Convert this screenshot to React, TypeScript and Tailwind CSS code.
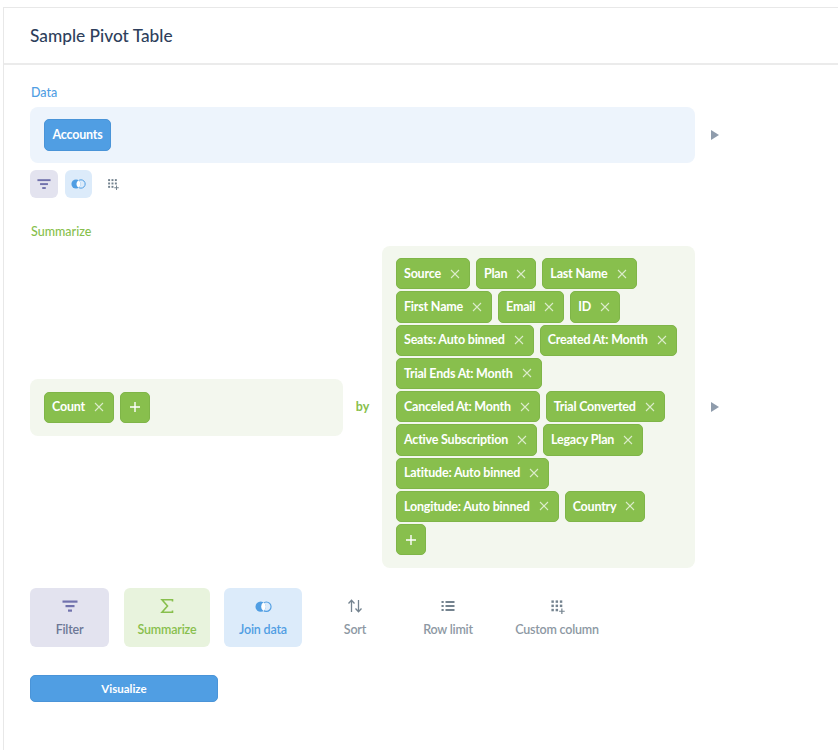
import React from "react";

const X = () => (
  <svg width="10" height="10" viewBox="0 0 10 10" className="ml-[9px] shrink-0 opacity-70" fill="none" stroke="#fff" strokeWidth="1.1">
    <path d="M1 1l8 8M9 1l-8 8" />
  </svg>
);

const Chip = ({ label }: { label: string }) => (
  <div className="flex h-[31.25px] items-center rounded-[5px] border border-[#7fb548] bg-[#88bf4d] pl-[7px] pr-[9px] text-[12.5px] font-bold tracking-[-0.2px] text-white">
    <span className="pt-px">{label}</span>
    <X />
  </div>
);

const Plus = () => (
  <div className="flex h-[31.25px] w-[30px] items-center justify-center rounded-[5px] border border-[#7fb548] bg-[#88bf4d]">
    <svg width="12" height="12" viewBox="0 0 12 12" stroke="#fff" strokeWidth="1.4"><path d="M6 1v10M1 6h10" /></svg>
  </div>
);

const FilterIcon = ({ size = 16 }: { size?: number }) => (
  <svg width={size} height={size} viewBox="0 0 16 16" fill="#7172ad">
    <rect x="0.5" y="2.5" width="15" height="2.2" />
    <rect x="3.5" y="7" width="9" height="2.2" />
    <rect x="6" y="11.5" width="4" height="2.2" />
  </svg>
);

const JoinIcon = ({ width = 17 }: { width?: number }) => (
  <svg width={width} height={(width * 12) / 18} viewBox="0 0 18 12">
    <circle cx="6" cy="6" r="5.5" fill="#509ee3" />
    <circle cx="12" cy="6" r="5" fill="none" stroke="#509ee3" strokeWidth="1.2" />
    <path d="M9 1.4a5.5 5.5 0 0 1 0 9.2a5.5 5.5 0 0 1 0-9.2z" fill="#fff" />
  </svg>
);

const ColumnIcon = ({ size = 16 }: { size?: number }) => (
  <svg width={size} height={size} viewBox="0 0 16 16" fill="#74838f">
    {[1.5, 6, 10.5].map((x) => [1.5, 6, 10.5].map((y) => (x === 10.5 && y === 10.5 ? null : <rect key={`${x}-${y}`} x={x} y={y} width="2.6" height="2.6" />)))}
    <path d="M12 10h1.3v2.4h2.4v1.3h-2.4V16H12v-2.3H9.7v-1.3H12z" />
  </svg>
);

const SigmaIcon = () => (
  <svg width="16" height="16" viewBox="0 0 16 16" fill="none" stroke="#88bf4d" strokeWidth="1.6">
    <path d="M13.5 3.5V1.7H3l5.5 6.3L3 14.3h10.5v-1.8" />
  </svg>
);

const SortIcon = () => (
  <svg width="16" height="16" viewBox="0 0 16 16" fill="none" stroke="#74838f" strokeWidth="1.3">
    <path d="M4.5 14V2.5M1.5 5.5l3-3.2 3 3.2M11.5 2v11.5M8.5 10.5l3 3.2 3-3.2" />
  </svg>
);

const ListIcon = () => (
  <svg width="16" height="16" viewBox="0 0 16 16" fill="#74838f">
    <rect x="1.5" y="3" width="2.2" height="2" /><rect x="5.5" y="3" width="9" height="2" />
    <rect x="1.5" y="7" width="2.2" height="2" /><rect x="5.5" y="7" width="9" height="2" />
    <rect x="1.5" y="11" width="2.2" height="2" /><rect x="5.5" y="11" width="9" height="2" />
  </svg>
);

const Triangle = () => (
  <svg width="8" height="10" viewBox="0 0 8 10" fill="#8f9cac"><path d="M0 0v10l8-5z" /></svg>
);

const Action = ({ icon, label, className, text }: { icon: React.ReactNode; label: string; className: string; text: string }) => (
  <div className={`flex h-[59px] flex-col items-center justify-between rounded-[6px] pb-[9px] pt-[10px] ${className}`}>
    <div className="flex h-4 items-center">{icon}</div>
    <div className={`text-[12.5px] font-semibold leading-4 tracking-[-0.2px] ${text}`}>{label}</div>
  </div>
);

const rows = [
  ["Source", "Plan", "Last Name"],
  ["First Name", "Email", "ID"],
  ["Seats: Auto binned", "Created At: Month"],
  ["Trial Ends At: Month"],
  ["Canceled At: Month", "Trial Converted"],
  ["Active Subscription", "Legacy Plan"],
  ["Latitude: Auto binned"],
  ["Longitude: Auto binned", "Country"],
];

export default function App() {
  return (
    <div className="h-[750px] overflow-hidden bg-white pt-[7px] font-['Lato',sans-serif]">
      <div className="ml-[3px] h-[743px] border-l border-t border-[#e8e8e8]">
        <div className="flex h-[57px] items-center border-b-2 border-[#ebebeb] pl-[26px] pt-px text-[17.3px] font-medium text-[#2e3f5c]">
          Sample Pivot Table
        </div>
        <div className="pl-[26px] pt-[20px]">
          <div className="pl-px text-[12.5px] font-medium leading-4 text-[#509ee3]">Data</div>
          <div className="mt-[6px] flex">
            <div className="flex h-[56px] w-[665px] shrink-0 items-center rounded-lg bg-[#edf4fc] pl-[14px]">
              <div className="flex h-[31.25px] items-center rounded-[5px] border border-[#4a94d8] bg-[#509ee3] px-[7.5px] text-[12.5px] font-bold tracking-[-0.2px] text-white">
                Accounts
              </div>
            </div>
            <div className="ml-4 flex shrink-0 items-center"><Triangle /></div>
          </div>
          <div className="mt-[7px] flex gap-[7px]">
            <div className="flex h-[28px] w-[28px] items-center justify-center rounded-[6px] bg-[#e3e3ef]"><FilterIcon size={14} /></div>
            <div className="flex h-[28px] w-[27px] items-center justify-center rounded-[6px] bg-[#dcebfa]"><JoinIcon width={15} /></div>
            <div className="flex h-[28px] w-[28px] items-center justify-center"><ColumnIcon size={12} /></div>
          </div>

          <div className="mt-[26px] pl-px text-[12.5px] font-medium leading-4 text-[#88bf4d]">Summarize</div>
          <div className="mt-[6px] flex w-[705px] items-center">
            <div className="flex h-[57px] w-[313px] shrink-0 items-center gap-[6px] rounded-lg bg-[#f3f7ee] pl-[14px]">
              <Chip label="Count" />
              <Plus />
            </div>
            <div className="w-[39px] shrink-0 pt-px text-center text-[12.5px] font-bold text-[#88bf4d]">by</div>
            <div className="flex w-[313px] shrink-0 flex-col gap-[2px] rounded-lg bg-[#f3f7ee] pb-[13px] pl-[14px] pt-3">
              {rows.map((r, i) => (
                <div key={i} className="flex gap-[6px]">
                  {r.map((c) => <Chip key={c} label={c} />)}
                </div>
              ))}
              <div className="flex"><Plus /></div>
            </div>
            <div className="ml-4 flex shrink-0 items-center"><Triangle /></div>
          </div>

          <div className="mt-[20px] flex items-center">
            <Action className="w-[79px] bg-[#e3e3ef]" text="text-[#6c7796]" icon={<FilterIcon />} label="Filter" />
            <Action className="ml-[15px] w-[86px] bg-[#e8f3dd]" text="text-[#88bf4d]" icon={<SigmaIcon />} label="Summarize" />
            <Action className="ml-[14px] w-[78px] bg-[#dcebfa]" text="text-[#509ee3]" icon={<JoinIcon />} label="Join data" />
            <Action className="ml-[14px] w-[78px]" text="text-[#8d98a3]" icon={<SortIcon />} label="Sort" />
            <Action className="ml-[14px] w-[80px]" text="text-[#8d98a3]" icon={<ListIcon />} label="Row limit" />
            <Action className="ml-[14px] w-[110px]" text="text-[#8d98a3]" icon={<ColumnIcon size={15} />} label="Custom column" />
          </div>

          <div className="mt-[28px] flex h-[27px] w-[188px] items-center justify-center rounded-[5px] border border-[#4a94d8] bg-[#509ee3] text-[11.5px] font-bold text-white">
            Visualize
          </div>
        </div>
      </div>
    </div>
  );
}
